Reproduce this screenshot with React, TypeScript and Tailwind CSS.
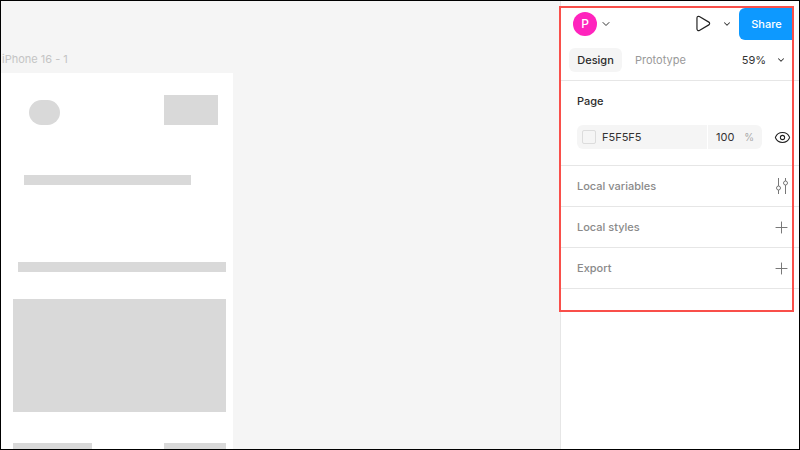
import { Play, ChevronDown, Eye, Plus } from "lucide-react"

function Section({ label, icon }: { label: string; icon: React.ReactNode }) {
  return (
    <div className="flex h-[41px] items-center justify-between border-b border-[#e6e6e6] pl-4 pr-2">
      <span className="text-[11px] font-medium text-[#8a8a8a]">{label}</span>
      {icon}
    </div>
  )
}

function SlidersIcon() {
  return (
    <svg className="mr-[3px]" width="12" height="16" viewBox="0 0 12 16" fill="none" stroke="#777" strokeWidth="1">
      <path d="M2.5 0V8M2.5 12V16M9.5 0V3M9.5 7V16" />
      <circle cx="2.5" cy="10" r="2" />
      <circle cx="9.5" cy="5" r="2" />
    </svg>
  )
}

export default function App() {
  return (
    <div className="relative flex h-[450px] w-[800px] overflow-hidden border border-black bg-white font-['Inter',sans-serif]">
      <div className="flex w-[559px] flex-col bg-[#f5f5f5] pt-[50px]">
        <div className="h-[22px] shrink-0 pl-px text-[11px] leading-[16px] text-[#c4c4c4]">iPhone 16 - 1</div>
        <div className="flex w-[232px] shrink-0 flex-col bg-white pb-10">
          <div className="flex items-end justify-between pl-7 pr-[15px] pt-[22px]">
            <div className="h-[25px] w-[31px] rounded-full bg-[#d9d9d9]" />
            <div className="h-[30px] w-[54px] bg-[#d9d9d9]" />
          </div>
          <div className="ml-[23px] mt-[50px] h-[10px] w-[167px] bg-[#d9d9d9]" />
          <div className="ml-[17px] mt-[77px] h-[10px] w-[208px] bg-[#d9d9d9]" />
          <div className="ml-3 mt-[27px] h-[113px] w-[213px] bg-[#d9d9d9]" />
          <div className="ml-3 mt-[31px] flex w-[213px] justify-between">
            <div className="h-[10px] w-[79px] bg-[#d9d9d9]" />
            <div className="h-[10px] w-[62px] bg-[#d9d9d9]" />
          </div>
        </div>
      </div>

      <div className="flex w-[239px] flex-col border-l border-[#e6e6e6] bg-white">
        <div className="flex h-[39px] shrink-0 items-start pl-3 pt-[7px]">
          <div className="mt-1 flex h-6 w-6 shrink-0 items-center justify-center rounded-full bg-[#ff24bd] text-[12px] font-medium text-white">P</div>
          <ChevronDown className="ml-[3px] mt-[10px] size-3 shrink-0 text-[#333]" strokeWidth={2} />
          <Play className="ml-[81px] mt-[6px] size-[19px] shrink-0 text-[#222]" strokeWidth={1.5} />
          <ChevronDown className="ml-[10px] mt-[11px] size-[10px] shrink-0 text-[#333]" strokeWidth={2.5} />
          <div className="ml-[7px] flex h-8 w-[55px] shrink-0 items-center justify-center rounded-l-md bg-[#0d99ff] text-[11px] font-medium text-white">Share</div>
        </div>
        <div className="flex h-[41px] shrink-0 items-start border-b border-[#e6e6e6] pl-2 pt-[8px]">
          <div className="flex h-6 w-[53px] items-center justify-center rounded-md bg-[#f5f5f5] text-[11px] font-medium text-[#2c2c2c]">Design</div>
          <div className="ml-[13px] h-6 text-[11px] leading-6 text-[#999]">Prototype</div>
          <div className="ml-[56px] h-6 text-[11px] leading-6 text-[#333]">59%</div>
          <ChevronDown className="ml-[10px] mt-[7px] size-[10px] text-[#333]" strokeWidth={2.5} />
        </div>
        <div className="flex h-[85px] shrink-0 flex-col border-b border-[#e6e6e6] pl-4">
          <div className="mt-[12px] h-4 text-[11px] font-medium leading-4 text-[#2c2c2c]">Page</div>
          <div className="mt-[16px] flex items-center">
            <div className="flex h-6 w-[185px] rounded-md bg-[#f5f5f5] text-[11px] leading-6 text-[#333]">
              <div className="flex w-[130px] items-center pl-[5px]">
                <div className="h-[14px] w-[14px] rounded-[2px] border border-[#dcdcdc] bg-[#f5f5f5]" />
                <span className="ml-[6px]">F5F5F5</span>
              </div>
              <div className="flex flex-1 items-center justify-between border-l border-white pl-2 pr-2">
                <span>100</span>
                <span className="text-[10px] text-[#aaa]">%</span>
              </div>
            </div>
            <Eye className="ml-3 size-[17px] text-[#222]" strokeWidth={1.5} />
          </div>
        </div>
        <Section label="Local variables" icon={<SlidersIcon />} />
        <Section label="Local styles" icon={<Plus className="size-[19px] text-[#777]" strokeWidth={1.25} />} />
        <Section label="Export" icon={<Plus className="size-[19px] text-[#777]" strokeWidth={1.25} />} />
      </div>

      <div className="absolute left-[558px] top-[5px] h-[306px] w-[235px] border-2 border-[#f94f4a]" />
    </div>
  )
}
